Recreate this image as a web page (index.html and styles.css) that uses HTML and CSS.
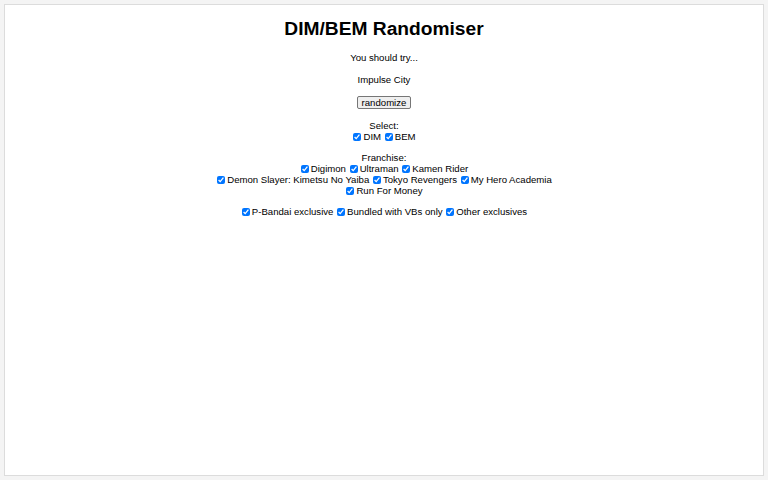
FILE: index.html
```html
<!DOCTYPE html>
<html lang="en">
<head>
  <meta charset="UTF-8">
  <title>DIM/BEM Randomiser</title>
  <link rel="stylesheet" href="styles.css">
</head>
<body>

<div class="card">
  <h1>DIM/BEM Randomiser</h1>

  <p>You should try...</p>
  <p id="resultado">Impulse City</p>
  <p class="acao"><button id="sortear" type="button">randomize</button></p>

  <div class="grupo">
    Select:<br>
    <label><input type="checkbox" checked>DIM</label>
    <label><input type="checkbox" checked>BEM</label>
  </div>

  <div class="grupo">
    Franchise:<br>
    <label><input type="checkbox" checked>Digimon</label>
    <label><input type="checkbox" checked>Ultraman</label>
    <label><input type="checkbox" checked>Kamen Rider</label><br>
    <label><input type="checkbox" checked>Demon Slayer: Kimetsu No Yaiba</label>
    <label><input type="checkbox" checked>Tokyo Revengers</label>
    <label><input type="checkbox" checked>My Hero Academia</label><br>
    <label><input type="checkbox" checked>Run For Money</label>
  </div>

  <div class="grupo">
    <label><input type="checkbox" checked>P-Bandai exclusive</label>
    <label><input type="checkbox" checked>Bundled with VBs only</label>
    <label><input type="checkbox" checked>Other exclusives</label>
  </div>
</div>

</body>
</html>
```

FILE: styles.css
```css
* {
  box-sizing: border-box;
}

html,
body {
  height: 100%;
}

body {
  margin: 0;
  padding: 4px;
  background: #f4f4f4;
  font-family: 'Liberation Sans', Arial, sans-serif;
  font-size: 9.6px;
  color: #000;
}

.card {
  height: 100%;
  background: #fff;
  border: 1px solid #dcdcdc;
  text-align: center;
  padding-top: 2px;
}

h1 {
  font-size: 19.2px;
  line-height: 22px;
  margin: 11px 0 12px;
}

p {
  margin: 11px 0;
  line-height: 11px;
}

.acao {
  line-height: 13px;
  margin-bottom: 12px;
}

button {
  font-family: 'Liberation Sans', Arial, sans-serif;
  font-size: 9.6px;
  line-height: 11px;
  padding: 0 4px;
  border: 1px solid #767676;
  border-radius: 2px;
  background: #efefef;
  color: #000;
}

.grupo {
  margin-bottom: 11px;
  line-height: 10.7px;
}

input[type="checkbox"] {
  width: 8px;
  height: 8px;
  margin: 0 2px 0 1px;
  vertical-align: -1px;
}
```
